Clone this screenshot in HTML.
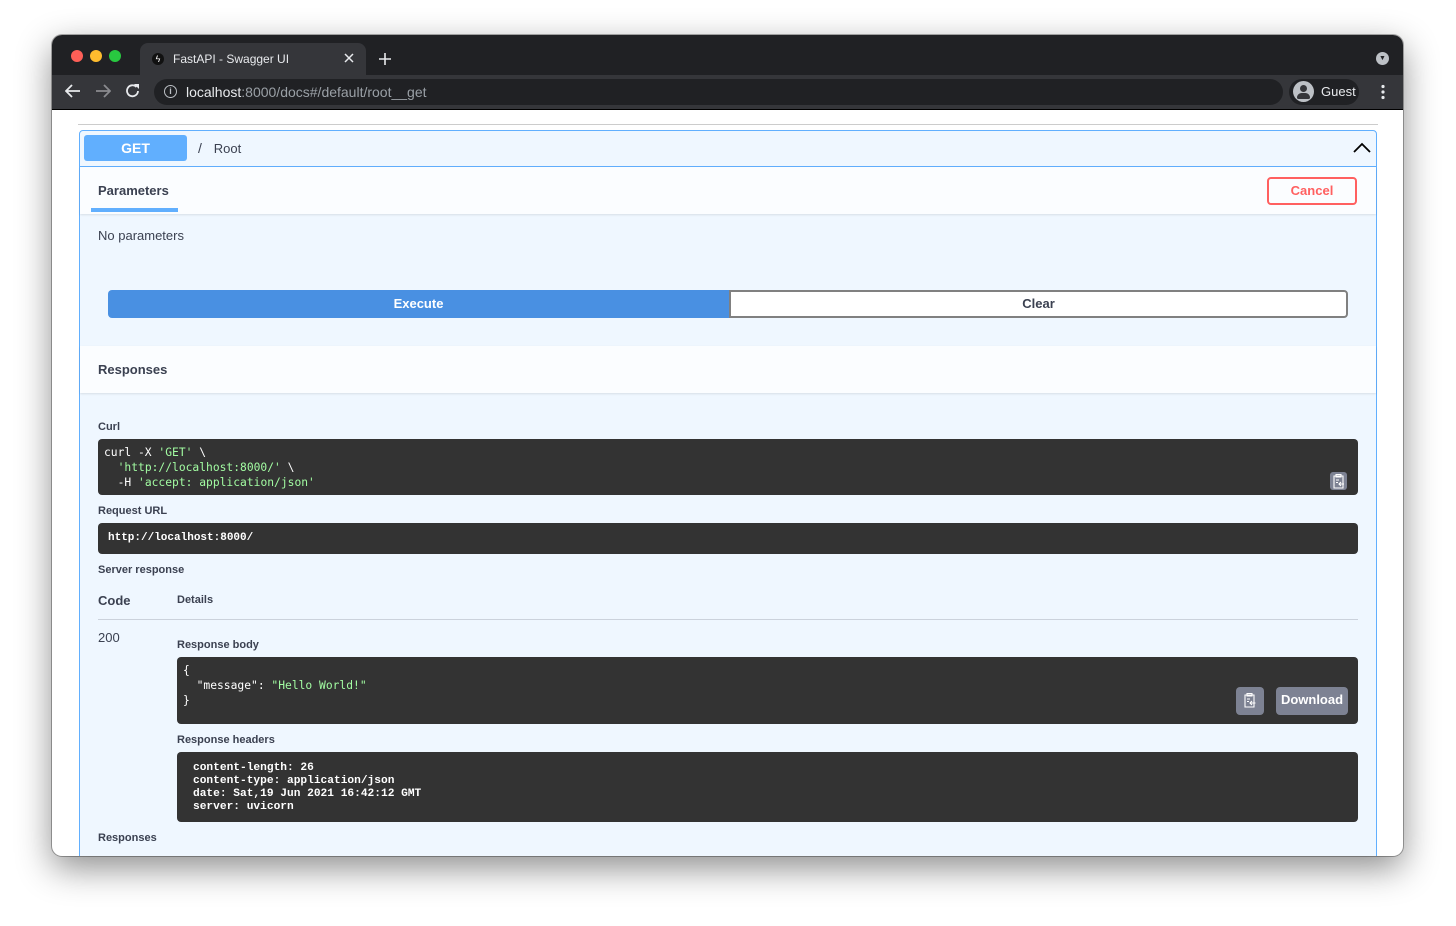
<!DOCTYPE html>
<html><head><meta charset="utf-8"><style>
*{box-sizing:border-box;margin:0;padding:0}
body{width:1456px;height:926px;background:#fff;position:relative;overflow:hidden;font-family:"Liberation Sans",Arial,sans-serif;color:#3b4151}
.a{position:absolute}
.win{left:52px;top:35px;width:1351px;height:821px;border-radius:10px;overflow:hidden;box-shadow:0 12px 35px rgba(0,0,0,.45),0 0 0 1px rgba(0,0,0,.3);background:#fff}
.mono{font-family:"DejaVu Sans Mono","Liberation Mono",monospace}
.code{background:#333;border-radius:4px;color:#fff}
.b{font-weight:bold}
.g{color:#a2fca2}
</style></head><body>
<div class="a win">
 <div class="a" style="left:0;top:0;width:1351px;height:40px;background:#202124"></div>
 <div class="a" style="left:19px;top:15px;width:12px;height:12px;border-radius:50%;background:#fe5f57"></div>
 <div class="a" style="left:38px;top:15px;width:12px;height:12px;border-radius:50%;background:#febc2e"></div>
 <div class="a" style="left:57px;top:15px;width:12px;height:12px;border-radius:50%;background:#28c840"></div>
 <div class="a" style="left:88px;top:8px;width:226px;height:34px;background:#35363a;border-radius:8px 8px 0 0"></div>
 <div class="a" style="left:100px;top:18px;width:12px;height:12px;border-radius:50%;background:#111;color:#fff;font-size:9px;text-align:center;line-height:12px">ϟ</div>
 <div class="a" style="left:121px;top:17px;color:#e8eaed;font-size:12px">FastAPI - Swagger UI</div>
 <svg class="a" style="left:292px;top:18px" width="10" height="10"><path d="M1 1L9 9M9 1L1 9" stroke="#e8eaed" stroke-width="1.5"/></svg>
 <svg class="a" style="left:326px;top:17px" width="14" height="14"><path d="M7 1V13M1 7H13" stroke="#e8eaed" stroke-width="1.6"/></svg>
 <div class="a" style="left:1324px;top:17px;width:13px;height:13px;border-radius:50%;background:#bdc1c6;color:#202124;font-size:7px;text-align:center;line-height:13px">▼</div>
 <div class="a" style="left:0;top:40px;width:1351px;height:34px;background:#35363a"></div>
 <svg class="a" style="left:13px;top:49px" width="16" height="14"><path d="M15 7H2M7 1L1 7L7 13" fill="none" stroke="#e8eaed" stroke-width="1.8"/></svg>
 <svg class="a" style="left:43px;top:49px" width="16" height="14"><path d="M1 7H14M9 1L15 7L9 13" fill="none" stroke="#8a8b8f" stroke-width="1.8"/></svg>
 <svg class="a" style="left:73px;top:48px" width="16" height="16"><path d="M13 8A5.5 5.5 0 1 1 11.5 4" fill="none" stroke="#e8eaed" stroke-width="1.8"/><path d="M9 1H14V6Z" fill="#e8eaed"/></svg>
 <div class="a" style="left:102px;top:44px;width:1129px;height:26px;border-radius:13px;background:#202124"></div>
 <div class="a" style="left:112px;top:50px;width:13px;height:13px;border-radius:50%;border:1.5px solid #bdc1c6;color:#bdc1c6;font-size:9px;text-align:center;line-height:10px;font-weight:bold">i</div>
 <div class="a" style="left:134px;top:49px;font-size:14px;color:#e8eaed">localhost<span style="color:#9aa0a6">:8000/docs#/default/root__get</span></div>
 <div class="a" style="left:1237px;top:44px;width:70px;height:26px;border-radius:13px;background:#202124"></div>
 <div class="a" style="left:1241px;top:46px;width:21px;height:21px;border-radius:50%;background:#bdc1c6"></div>
 <div class="a" style="left:1248px;top:50px;width:7px;height:7px;border-radius:50%;background:#35363a"></div>
 <div class="a" style="left:1245px;top:58px;width:13px;height:6px;border-radius:6px 6px 2px 2px;background:#35363a"></div>
 <div class="a" style="left:1269px;top:49px;font-size:13px;color:#e8eaed">Guest</div>
 <svg class="a" style="left:1328px;top:49px" width="6" height="16"><circle cx="3" cy="2.5" r="1.6" fill="#e8eaed"/><circle cx="3" cy="8" r="1.6" fill="#e8eaed"/><circle cx="3" cy="13.5" r="1.6" fill="#e8eaed"/></svg>
 <div class="a" style="left:0;top:74px;width:1351px;height:1px;background:#000"></div>

 <div class="a" style="left:26px;top:89px;width:1300px;height:1px;background:#ccc"></div>
 <div class="a" style="left:27px;top:95px;width:1298px;height:740px;border:1px solid #61affe;border-radius:4px;background:#eff7ff"></div>
 <div class="a" style="left:28px;top:131px;width:1296px;height:1px;background:#61affe"></div>
 <div class="a" style="left:32px;top:100px;width:103px;height:26px;background:#61affe;border-radius:3px;color:#fff;font-weight:bold;font-size:14px;text-align:center;line-height:26px">GET</div>
 <div class="a" style="left:146px;top:105px;font-size:14px;color:#3b4151">/ <span style="margin-left:8px;font-size:13px">Root</span></div>
 <svg class="a" style="left:1300px;top:106px" width="20" height="14"><path d="M2 11 L10 3 L18 11" fill="none" stroke="#000" stroke-width="1.8"/></svg>
 <div class="a" style="left:28px;top:132px;width:1296px;height:47px;background:#fbfdff;box-shadow:0 1px 2px rgba(0,0,0,.1)"></div>
 <div class="a b" style="left:46px;top:148px;font-size:13px;color:#3b4151">Parameters</div>
 <div class="a" style="left:39px;top:173px;width:87px;height:4px;background:#61affe"></div>
 <div class="a b" style="left:1215px;top:142px;width:90px;height:28px;border:2px solid #ff6060;border-radius:4px;color:#ff6060;font-size:13px;text-align:center;line-height:24px">Cancel</div>
 <div class="a" style="left:46px;top:193px;font-size:13px">No parameters</div>
 <div class="a b" style="left:56px;top:255px;width:621px;height:28px;background:#4990e2;border-radius:4px 0 0 4px;color:#fff;font-size:13px;text-align:center;line-height:28px">Execute</div>
 <div class="a b" style="left:677px;top:255px;width:619px;height:28px;border:2px solid #808080;border-radius:0 4px 4px 0;background:#fff;font-size:13px;text-align:center;line-height:24px">Clear</div>
 <div class="a" style="left:28px;top:311px;width:1296px;height:47px;background:#fbfdff;box-shadow:0 1px 2px rgba(0,0,0,.1)"></div>
 <div class="a b" style="left:46px;top:327px;font-size:13px">Responses</div>
 <div class="a b" style="left:46px;top:386px;font-size:11px">Curl</div>
 <div class="a code mono" style="left:46px;top:404px;width:1260px;height:56px;padding:6px 6px;font-size:11.3px;line-height:15px;white-space:pre">curl -X <span class="g">'GET'</span> \
  <span class="g">'http://localhost:8000/'</span> \
  -H <span class="g">'accept: application/json'</span></div>
 <div class="a" style="left:1278px;top:437px;width:17px;height:18px;background:#7d8293;border-radius:3px"></div>
 <svg class="a" style="left:1280px;top:438px" width="13" height="16"><path d="M2 3H11V15H2Z M4 1.5H9V4H4Z M4 7H7 M4 9.5H6 M12 11H7 M9 9L7 11L9 13" fill="none" stroke="#fff" stroke-width="1.1"/></svg>
 <div class="a b" style="left:46px;top:470px;font-size:11px">Request URL</div>
 <div class="a code" style="left:46px;top:488px;width:1260px;height:31px;padding:9px 10px;font-family:'Liberation Mono',monospace;font-weight:bold;font-size:11px">http://localhost:8000/</div>
 <div class="a b" style="left:46px;top:529px;font-size:11px">Server response</div>
 <div class="a b" style="left:46px;top:558px;font-size:13px">Code</div>
 <div class="a b" style="left:125px;top:559px;font-size:11px">Details</div>
 <div class="a" style="left:46px;top:584px;width:1260px;height:1px;background:rgba(59,65,81,.2)"></div>
 <div class="a" style="left:46px;top:595px;font-size:13px">200</div>
 <div class="a b" style="left:125px;top:604px;font-size:11px">Response body</div>
 <div class="a code mono" style="left:125px;top:622px;width:1181px;height:67px;padding:6px 6px;font-size:11.3px;line-height:15px;white-space:pre">{
  "message": <span class="g">"Hello World!"</span>
}</div>
 <div class="a" style="left:1184px;top:652px;width:28px;height:28px;background:#7d8293;border-radius:4px"></div>
 <svg class="a" style="left:1191px;top:657px" width="14" height="17"><path d="M2 3H11V15H2Z M4 1.5H9V4H4Z M4 7H7 M4 9.5H6 M12.5 11H7 M9 9L7 11L9 13" fill="none" stroke="#fff" stroke-width="1.1"/></svg>
 <div class="a b" style="left:1224px;top:652px;width:72px;height:28px;background:#7d8293;border-radius:4px;color:#fff;font-size:13px;text-align:center;line-height:26px">Download</div>
 <div class="a b" style="left:125px;top:699px;font-size:11px">Response headers</div>
 <div class="a code" style="left:125px;top:717px;width:1181px;height:70px;padding:10px 16px;font-family:'Liberation Mono',monospace;font-weight:bold;font-size:11.2px;line-height:13px;white-space:pre">content-length: 26
content-type: application/json
date: Sat,19 Jun 2021 16:42:12 GMT
server: uvicorn</div>
 <div class="a b" style="left:46px;top:797px;font-size:11px">Responses</div>
</div>
</body></html>
